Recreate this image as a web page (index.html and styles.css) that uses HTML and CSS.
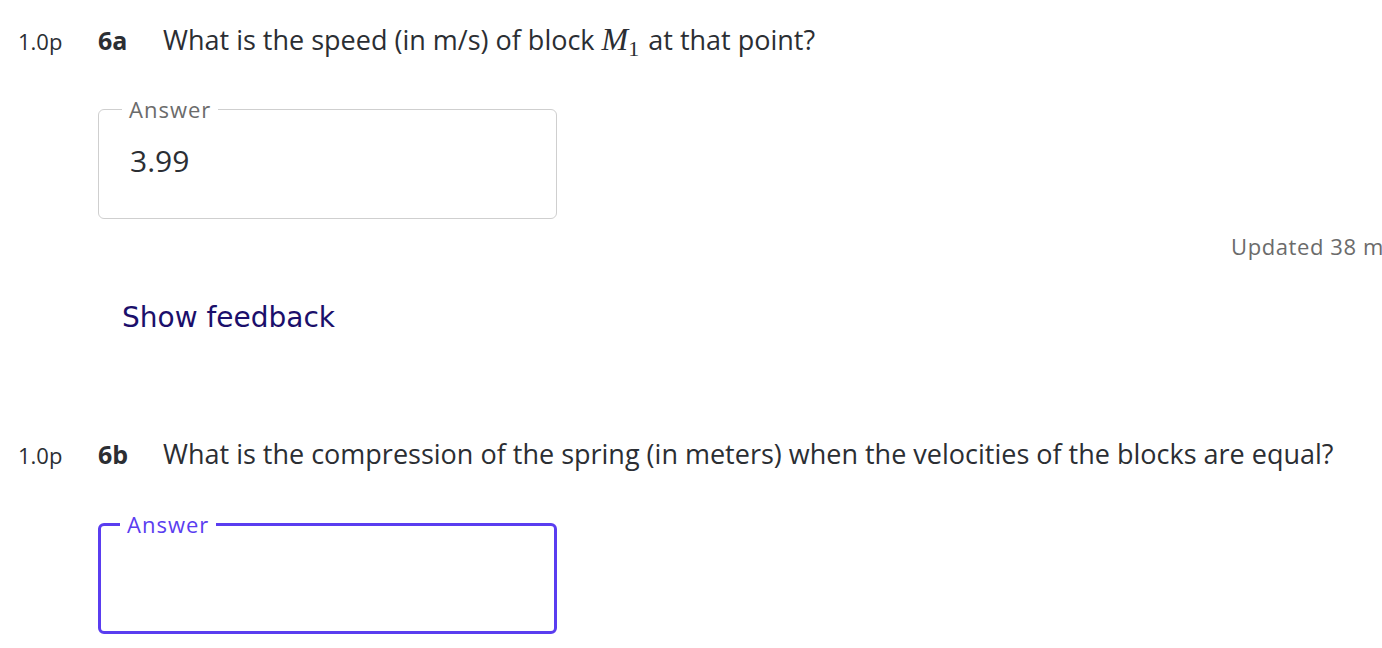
FILE: index.html
```html
<!DOCTYPE html>
<html lang="en">
<head>
    <meta charset="UTF-8">
    <meta name="viewport" content="width=device-width, initial-scale=1.0">
    <title>Assignment</title>
    <link rel="stylesheet" href="styles.css">
</head>
<body>
    <div class="page">
        <section class="question">
            <div class="question-head">
                <span class="points">1.0p</span>
                <span class="number">6a</span>
                <p class="text">What is the speed (in m/s) of block <span class="math"><i>M</i><sub>1</sub></span> at that point?</p>
            </div>
            <fieldset class="answer">
                <legend>Answer</legend>
                <div class="value">3.99</div>
            </fieldset>
            <div class="meta">
                <span class="updated">Updated 38 minutes ago</span>
            </div>
            <button class="feedback-btn">Show feedback</button>
        </section>

        <section class="question second">
            <div class="question-head">
                <span class="points">1.0p</span>
                <span class="number">6b</span>
                <p class="text">What is the compression of the spring (in meters) when the velocities of the blocks are equal?</p>
            </div>
            <fieldset class="answer focused">
                <legend>Answer</legend>
                <div class="value"></div>
            </fieldset>
        </section>
    </div>
</body>
</html>
```

FILE: styles.css
```css
* {
    margin: 0;
    padding: 0;
    box-sizing: border-box;
}

body {
    background: #fff;
    font-family: 'Open Sans', 'Lato', sans-serif;
    color: #2b2e33;
    overflow: hidden;
}

.page {
    padding: 19px 0 0 18px;
}

.question-head {
    display: flex;
    align-items: baseline;
    height: 40px;
    line-height: 40px;
}

.points {
    width: 80px;
    font-size: 22px;
    color: #2b2e33;
}

.number {
    width: 65px;
    font-size: 25px;
    font-weight: 700;
}

.text {
    font-size: 27px;
    white-space: nowrap;
}

.math {
    font-family: 'Liberation Serif', serif;
    font-size: 32px;
    margin-right: 2px;
}

.math sub {
    font-style: normal;
    font-size: 22px;
    vertical-align: -6px;
    line-height: 0;
}

.answer {
    margin: 39px 0 0 80px;
    width: 459px;
    height: 121px;
    border: 1px solid #cfcfcf;
    border-radius: 6px;
    padding: 0 31px;
}

.answer legend {
    margin-left: -8px;
    padding: 0 7px;
    font-size: 22px;
    letter-spacing: 1px;
    color: #6b6b6b;
    line-height: 22px;
}

.value {
    padding-top: 20px;
    font-size: 30px;
    color: #2b2e33;
}

.answer.focused {
    border: 3px solid #5a3df0;
    padding: 0 29px;
}

.answer.focused legend {
    color: #5a3df0;
    margin-left: -10px;
}

.meta {
    margin-top: 12px;
    padding-left: 1213px;
    overflow: hidden;
}

.updated {
    font-size: 22px;
    letter-spacing: 0.6px;
    color: #6b6b6b;
    white-space: nowrap;
}

.feedback-btn {
    margin: 40px 0 0 104px;
    background: none;
    border: none;
    font-family: 'DejaVu Sans', 'Inter', sans-serif;
    font-size: 28px;
    font-weight: 500;
    color: #1b0f6b;
    cursor: pointer;
}

.second {
    margin-top: 100px;
}
```
